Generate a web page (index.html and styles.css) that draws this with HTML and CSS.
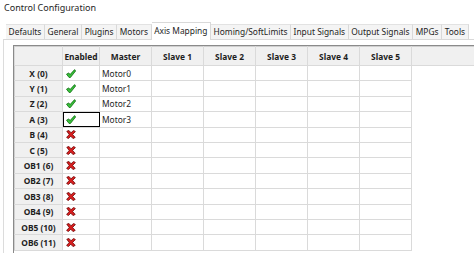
FILE: index.html
```html
<!DOCTYPE html>
<html lang="en">
<head>
  <meta charset="UTF-8">
  <title>Control Configuration</title>
  <link rel="stylesheet" href="styles.css">
</head>
<body>

<div class="title">Control Configuration</div>

<div class="tabs">
  <span class="tab">Defaults</span>
  <span class="tab">General</span>
  <span class="tab">Plugins</span>
  <span class="tab">Motors</span>
  <span class="tab active">Axis Mapping</span>
  <span class="tab">Homing/SoftLimits</span>
  <span class="tab">Input Signals</span>
  <span class="tab">Output Signals</span>
  <span class="tab">MPGs</span>
  <span class="tab">Tools</span>
</div>

<div class="panel">
  <div class="grid-frame">
    <table class="grid" id="axisTable">
      <colgroup>
        <col class="c-axis">
        <col class="c-enabled">
        <col class="c-master">
        <col class="c-slave"><col class="c-slave"><col class="c-slave"><col class="c-slave"><col class="c-slave">
        <col class="c-fill">
      </colgroup>
      <thead>
        <tr>
          <th></th>
          <th>Enabled</th>
          <th>Master</th>
          <th>Slave 1</th>
          <th>Slave 2</th>
          <th>Slave 3</th>
          <th>Slave 4</th>
          <th>Slave 5</th>
          <th class="fill"></th>
        </tr>
      </thead>
      <tbody></tbody>
    </table>
  </div>
</div>

<script>
// axis rows: label, enabled, master motor
const axes = [
  ["X (0)", true, "Motor0"],
  ["Y (1)", true, "Motor1"],
  ["Z (2)", true, "Motor2"],
  ["A (3)", true, "Motor3"],
  ["B (4)", false, ""],
  ["C (5)", false, ""],
  ["OB1 (6)", false, ""],
  ["OB2 (7)", false, ""],
  ["OB3 (8)", false, ""],
  ["OB4 (9)", false, ""],
  ["OB5 (10)", false, ""],
  ["OB6 (11)", false, ""]
];

const checkIcon = `<svg class="icon" width="10" height="9" viewBox="0 0 10 9">
  <path d="M0.5 5.2 L2.8 3.9 L4 5.6 L8.6 0.6 L9.6 2 L4.4 8.5 L3.1 8.5 Z" fill="#38c23a" stroke="#0f6b12" stroke-width="0.8" stroke-linejoin="round"/>
</svg>`;

const crossIcon = `<svg class="icon" width="10" height="9" viewBox="0 0 10 9">
  <path d="M0.8 1.2 L3 0.5 L5 2.8 L7.6 0.4 L9.4 1.6 L6.6 4.4 L9.2 7.4 L7 8.6 L4.8 6.2 L2.4 8.6 L0.6 7.4 L3.2 4.6 Z" fill="#d81e1e" stroke="#6e0808" stroke-width="0.8" stroke-linejoin="round"/>
</svg>`;

const tbody = document.querySelector("#axisTable tbody");
axes.forEach((axis, i) => {
  const row = tbody.insertRow();
  row.innerHTML = `
    <th>${axis[0]}</th>
    <td class="enabled${i === 3 ? ' selected' : ''}">${axis[1] ? checkIcon : crossIcon}</td>
    <td>${axis[2]}</td>
    <td></td><td></td><td></td><td></td><td></td>
  `;
});
</script>

</body>
</html>
```

FILE: styles.css
```css
html {
  overflow: hidden;
}

body {
  margin: 0;
  background: #fff;
  font-family: "Noto Sans", "Open Sans", sans-serif;
  font-size: 8.4px;
  color: #1e1e1e;
}

.title {
  height: 23px;
  padding: 1px 0 0 4px;
  box-sizing: border-box;
  font-size: 9px;
}

.tabs {
  display: flex;
  height: 16px;
  padding-left: 6px;
  align-items: flex-end;
}

.tab {
  height: 14px;
  line-height: 14px;
  padding: 0 2.6px;
  background: #f4f4f4;
  border-top: 1px solid #e2e2e2;
  border-right: 1px solid #d9d9d9;
  white-space: nowrap;
}

.tab.active {
  height: 17px;
  line-height: 16px;
  margin-bottom: -1px;
  background: #fff;
  border: 1px solid #d9d9d9;
  border-bottom: none;
  border-left: none;
  position: relative;
}

.panel {
  margin-left: 3px;
  padding: 5px 0 0 9px;
  border-top: 1px solid #d9d9d9;
  border-left: 1px solid #dcdcdc;
  height: 240px;
}

.grid-frame {
  border-top: 1px solid #8a8a8a;
  border-left: 1px solid #8a8a8a;
  height: 240px;
  background: #fff;
}

.grid {
  table-layout: fixed;
  border-collapse: collapse;
  width: 480px;
}

.c-axis { width: 48px; }
.c-enabled { width: 37px; }
.c-master { width: 52px; }
.c-slave { width: 52px; }

.grid th,
.grid td {
  padding: 0;
  border: 1px solid #dadada;
  white-space: nowrap;
  overflow: hidden;
}

.grid thead th {
  height: 18px;
  background: #f0f0f0;
  font-weight: bold;
  border-top-color: #cfcfcf;
}

.grid thead th.fill {
  border-right: none;
}

.grid tbody tr {
  height: 15.4px;
}

.grid tbody th {
  background: #f0f0f0;
  font-weight: bold;
  border-left-color: #cfcfcf;
}

.grid tbody td {
  padding-left: 2px;
}

.grid td.enabled {
  padding-left: 3px;
}

.grid td.selected {
  outline: 1.5px solid #000;
  outline-offset: -1.5px;
}

.icon {
  display: block;
}
```
